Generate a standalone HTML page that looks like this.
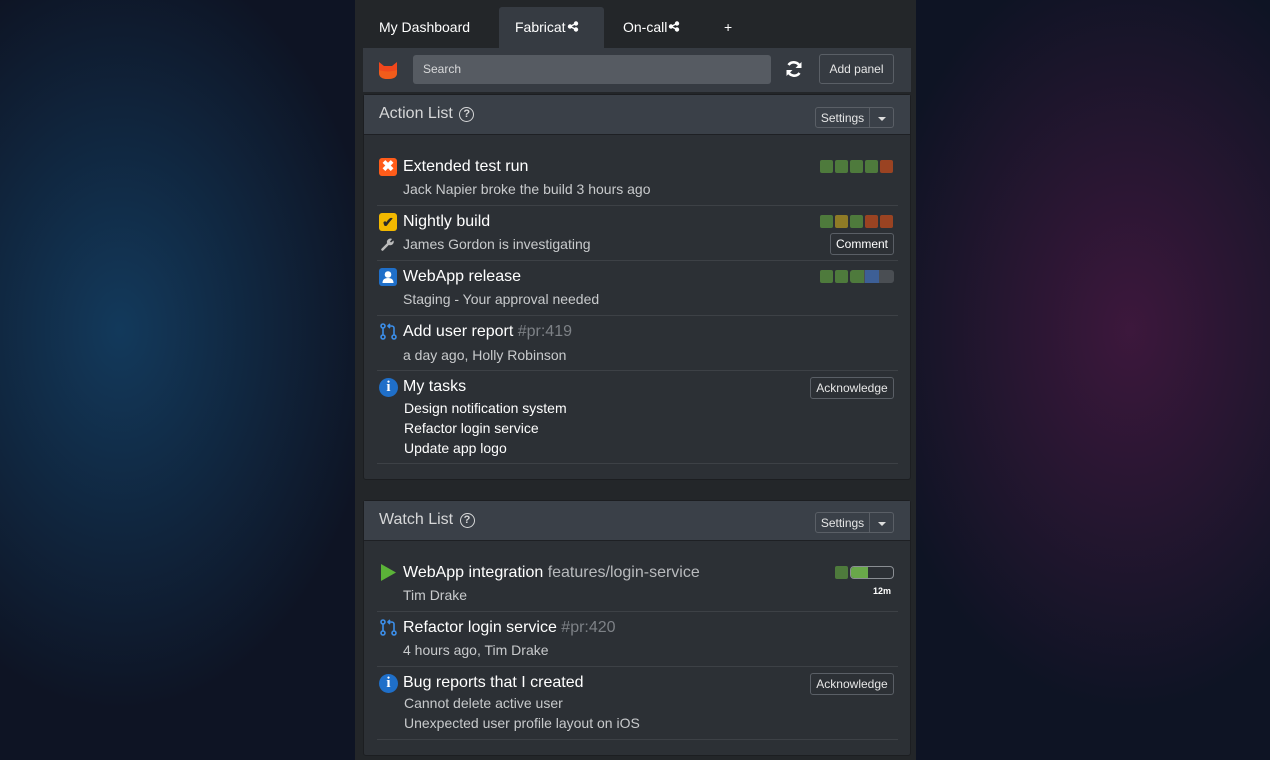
<!DOCTYPE html>
<html><head><meta charset="utf-8"><style>
*{margin:0;padding:0;box-sizing:border-box}
body{width:1270px;height:760px;overflow:hidden;font-family:"Liberation Sans",Arial,sans-serif;position:relative;
background:radial-gradient(ellipse 260px 380px at 120px 330px,rgba(20,70,110,.75),transparent),radial-gradient(ellipse 260px 380px at 1130px 330px,rgba(80,25,70,.7),transparent),#0e1424;}
.a{position:absolute}
.col{left:355px;top:0;width:561px;height:760px;background:#232629}
.t{color:#fff;font-size:14px;white-space:nowrap}
.ttl{color:#fff;font-size:16px;white-space:nowrap}
.sub{color:#c8cacc;font-size:14px;white-space:nowrap}
.g{color:#7d8186}
.btn{border:1px solid #5a5f66;border-radius:3px;color:#e6e6e6;font-size:12px;text-align:center;line-height:20px;background:#2c3035}
.sep{left:377px;width:521px;height:1px;background:#3d4146}
.sq{width:13px;height:13px;border-radius:2px;top:0}
.gr{background:#4e7a3c}.rd{background:#9a4322}.yl{background:#8f7b26}
.q{display:inline-block;width:15px;height:15px;border:1.5px solid #d6d7d8;border-radius:50%;font-size:11px;text-align:center;line-height:12px;font-weight:bold;vertical-align:1px;margin-left:2px}
</style></head><body>
<div class="a col"></div>
<!-- tabs -->
<div class="a" style="left:499px;top:7px;width:105px;height:42px;background:#363b42;border-radius:3px 3px 0 0"></div>
<div class="a t" style="left:379px;top:19px">My Dashboard</div>
<div class="a t" style="left:515px;top:19px">Fabricat<svg width="12" height="11" viewBox="0 0 12 11" style="margin-left:1px"><circle cx="9" cy="2.5" r="2.2" fill="#fff"/><circle cx="3" cy="5.5" r="2.2" fill="#fff"/><circle cx="9" cy="8.5" r="2.2" fill="#fff"/><path d="M9 2.5L3 5.5L9 8.5" stroke="#fff" stroke-width="1.3" fill="none"/></svg></div>
<div class="a t" style="left:623px;top:19px">On-call<svg width="12" height="11" viewBox="0 0 12 11" style="margin-left:1px"><circle cx="9" cy="2.5" r="2.2" fill="#fff"/><circle cx="3" cy="5.5" r="2.2" fill="#fff"/><circle cx="9" cy="8.5" r="2.2" fill="#fff"/><path d="M9 2.5L3 5.5L9 8.5" stroke="#fff" stroke-width="1.3" fill="none"/></svg></div>
<div class="a t" style="left:724px;top:19px">+</div>
<!-- toolbar -->
<div class="a" style="left:363px;top:48px;width:548px;height:44px;background:#363b42"></div>
<svg class="a" style="left:378px;top:61px" width="20" height="19" viewBox="0 0 20 19"><path d="M1 1L6 5H14L19 1V12Q19 18 10 18Q1 18 1 12Z" fill="#f0471c"/><path d="M1 9Q10 12 19 9V12Q19 18 10 18Q1 18 1 12Z" fill="#f26a1a" opacity=".6"/></svg>
<div class="a" style="left:413px;top:55px;width:358px;height:29px;background:#565b62;border-radius:3px"></div>
<div class="a" style="left:423px;top:62px;color:#d8d9da;font-size:12px">Search</div>
<svg class="a" style="left:785px;top:60px" width="18" height="18" viewBox="0 0 18 18"><path d="M15 7A6.5 6.5 0 0 0 3.5 5" stroke="#fff" stroke-width="2.6" fill="none"/><path d="M16.5 2V8H10.5Z" fill="#fff"/><path d="M3 11A6.5 6.5 0 0 0 14.5 13" stroke="#fff" stroke-width="2.6" fill="none"/><path d="M1.5 16V10H7.5Z" fill="#fff"/></svg>
<div class="a btn" style="left:819px;top:54px;width:75px;height:30px;line-height:28px;background:#363b42">Add panel</div>

<!-- panel 1 -->
<div class="a" style="left:363px;top:94px;width:548px;height:386px;background:#2c3035;border:1px solid #1c1e21;border-radius:3px"></div>
<div class="a" style="left:364px;top:95px;width:546px;height:40px;background:#3a4048;border-bottom:1px solid #1e2024"></div>
<div class="a" style="left:379px;top:105px;color:#d6d7d8;font-size:16px">Action List <span class="q">?</span></div>
<div class="a btn" style="left:815px;top:107px;width:55px;height:21px;background:#3a4048;border-radius:3px 0 0 3px">Settings</div>
<div class="a btn" style="left:869px;top:107px;width:25px;height:21px;background:#3a4048;border-radius:0 3px 3px 0"><span style="display:inline-block;border:4px solid transparent;border-top:4px solid #ddd;vertical-align:-3px"></span></div>

<!-- row1 -->
<div class="a" style="left:379px;top:158px;width:18px;height:18px;background:#ff5c1a;border-radius:3px;color:#fff;font-size:15px;font-weight:bold;text-align:center;line-height:18px">✖</div>
<div class="a ttl" style="left:403px;top:158px">Extended test run</div>
<div class="a sub" style="left:403px;top:181px">Jack Napier broke the build 3 hours ago</div>
<div class="a" style="left:820px;top:160px;width:75px;height:13px"><div class="a sq gr" style="left:0"></div><div class="a sq gr" style="left:15px"></div><div class="a sq gr" style="left:30px"></div><div class="a sq gr" style="left:45px"></div><div class="a sq rd" style="left:60px"></div></div>
<div class="a sep" style="top:205px"></div>
<!-- row2 -->
<div class="a" style="left:379px;top:213px;width:18px;height:18px;background:#f2b800;border-radius:3px;color:#2a2a2a;font-size:14px;font-weight:bold;text-align:center;line-height:18px">✔</div>
<div class="a ttl" style="left:403px;top:213px">Nightly build</div>
<svg class="a" style="left:381px;top:237px" width="14" height="14" viewBox="0 0 14 14"><path d="M1.5 12.5L7 7" stroke="#bbb" stroke-width="2.5" stroke-linecap="round"/><path d="M6 6A3.5 3.5 0 0 1 11 2L9 4.5L10 5.5L12.5 3.5A3.5 3.5 0 0 1 8 8Z" fill="#bbb"/></svg>
<div class="a sub" style="left:403px;top:236px">James Gordon is investigating</div>
<div class="a" style="left:820px;top:215px;width:75px;height:13px"><div class="a sq gr" style="left:0"></div><div class="a sq yl" style="left:15px"></div><div class="a sq gr" style="left:30px"></div><div class="a sq rd" style="left:45px"></div><div class="a sq rd" style="left:60px"></div></div>
<div class="a btn" style="left:830px;top:233px;width:64px;height:22px;color:#fff">Comment</div>
<div class="a sep" style="top:260px"></div>
<!-- row3 -->
<div class="a" style="left:379px;top:268px;width:18px;height:18px;background:#1f6fc9;border-radius:3px"><svg width="18" height="18" viewBox="0 0 18 18"><circle cx="9" cy="6.5" r="3.3" fill="#fff"/><path d="M3.5 15Q3.5 10 9 10Q14.5 10 14.5 15Z" fill="#fff"/></svg></div>
<div class="a ttl" style="left:403px;top:268px">WebApp release</div>
<div class="a sub" style="left:403px;top:291px">Staging - Your approval needed</div>
<div class="a" style="left:820px;top:270px;width:75px;height:13px"><div class="a sq gr" style="left:0"></div><div class="a sq gr" style="left:15px"></div><div class="a" style="left:30px;top:0;width:44px;height:13px;background:#4a4e53;border-radius:3px;overflow:hidden"><div class="a" style="left:0;top:0;width:14px;height:13px;background:#4e7a3c"></div><div class="a" style="left:15px;top:0;width:14px;height:13px;background:#3d5f96"></div></div></div>
<div class="a sep" style="top:315px"></div>
<!-- row4 -->
<svg class="a" style="left:379px;top:322px" width="19" height="19" viewBox="0 0 19 19" fill="none" stroke="#3c8ee8" stroke-width="1.6"><circle cx="4" cy="4" r="2"/><circle cx="4" cy="15" r="2"/><circle cx="15" cy="15" r="2"/><path d="M4 6V13M15 13V6Q15 4 12 4H9M11 2L9 4L11 6"/></svg>
<div class="a ttl" style="left:403px;top:323px">Add user report <span class="g">#pr:419</span></div>
<div class="a sub" style="left:403px;top:347px">a day ago, Holly Robinson</div>
<div class="a sep" style="top:370px"></div>
<!-- row5 -->
<div class="a" style="left:379px;top:378px;width:19px;height:19px;background:#1f6fc9;border-radius:50%;color:#fff;font-family:'Liberation Serif',serif;font-weight:bold;font-size:15px;text-align:center;line-height:19px">i</div>
<div class="a ttl" style="left:403px;top:378px">My tasks</div>
<div class="a t" style="left:404px;top:398px;line-height:20px">Design notification system<br>Refactor login service<br>Update app logo</div>
<div class="a btn" style="left:810px;top:377px;width:84px;height:22px">Acknowledge</div>
<div class="a sep" style="top:463px"></div>

<!-- panel 2 -->
<div class="a" style="left:363px;top:500px;width:548px;height:256px;background:#2c3035;border:1px solid #1c1e21;border-radius:3px"></div>
<div class="a" style="left:364px;top:501px;width:546px;height:40px;background:#3a4048;border-bottom:1px solid #1e2024"></div>
<div class="a" style="left:379px;top:511px;color:#d6d7d8;font-size:16px">Watch List <span class="q">?</span></div>
<div class="a btn" style="left:815px;top:512px;width:55px;height:21px;background:#3a4048;border-radius:3px 0 0 3px">Settings</div>
<div class="a btn" style="left:869px;top:512px;width:25px;height:21px;background:#3a4048;border-radius:0 3px 3px 0"><span style="display:inline-block;border:4px solid transparent;border-top:4px solid #ddd;vertical-align:-3px"></span></div>

<svg class="a" style="left:380px;top:564px" width="17" height="17" viewBox="0 0 17 17"><path d="M1 0L16 8.5L1 17Z" fill="#5bb338"/></svg>
<div class="a ttl" style="left:403px;top:564px">WebApp integration <span style="color:#b8babd">features/login-service</span></div>
<div class="a sub" style="left:403px;top:587px">Tim Drake</div>
<div class="a sq gr" style="left:835px;top:566px"></div>
<div class="a" style="left:850px;top:566px;width:44px;height:13px;border:1px solid #8a8e93;border-radius:4px;overflow:hidden"><div style="width:17px;height:11px;background:#69a84a"></div></div>
<div class="a" style="left:873px;top:586px;color:#fff;font-size:9px;font-weight:bold">12m</div>
<div class="a sep" style="top:611px"></div>

<svg class="a" style="left:379px;top:618px" width="19" height="19" viewBox="0 0 19 19" fill="none" stroke="#3c8ee8" stroke-width="1.6"><circle cx="4" cy="4" r="2"/><circle cx="4" cy="15" r="2"/><circle cx="15" cy="15" r="2"/><path d="M4 6V13M15 13V6Q15 4 12 4H9M11 2L9 4L11 6"/></svg>
<div class="a ttl" style="left:403px;top:619px">Refactor login service <span class="g">#pr:420</span></div>
<div class="a sub" style="left:403px;top:642px">4 hours ago, Tim Drake</div>
<div class="a sep" style="top:666px"></div>

<div class="a" style="left:379px;top:674px;width:19px;height:19px;background:#1f6fc9;border-radius:50%;color:#fff;font-family:'Liberation Serif',serif;font-weight:bold;font-size:15px;text-align:center;line-height:19px">i</div>
<div class="a ttl" style="left:403px;top:674px">Bug reports that I created</div>
<div class="a sub" style="left:404px;top:693px;line-height:20px">Cannot delete active user<br>Unexpected user profile layout on iOS</div>
<div class="a btn" style="left:810px;top:673px;width:84px;height:22px">Acknowledge</div>
<div class="a sep" style="top:739px"></div>
</body></html>
